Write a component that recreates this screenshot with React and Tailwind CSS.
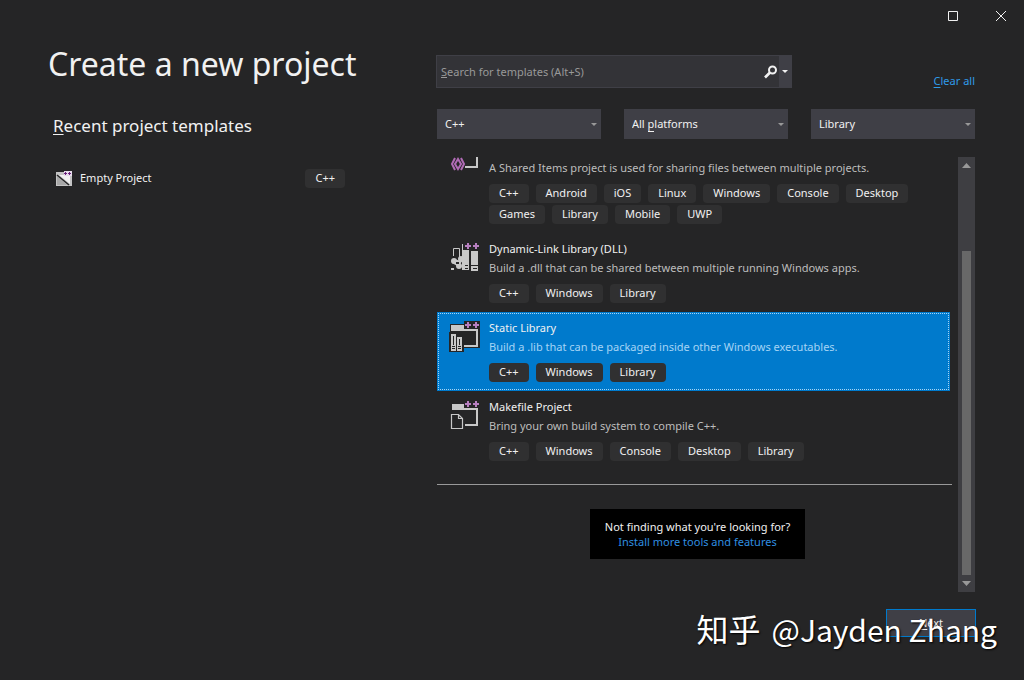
import React, { useState } from "react";

const recent = [{ name: "Empty Project", tag: "C++" }];

const templates = [
    {
        id: "shared",
        icon: SharedIcon,
        description: "A Shared Items project is used for sharing files between multiple projects.",
        tags: ["C++", "Android", "iOS", "Linux", "Windows", "Console", "Desktop", "Games", "Library", "Mobile", "UWP"],
    },
    {
        id: "dll",
        icon: DllIcon,
        title: "Dynamic-Link Library (DLL)",
        description: "Build a .dll that can be shared between multiple running Windows apps.",
        tags: ["C++", "Windows", "Library"],
    },
    {
        id: "static",
        icon: StaticIcon,
        title: "Static Library",
        description: "Build a .lib that can be packaged inside other Windows executables.",
        tags: ["C++", "Windows", "Library"],
    },
    {
        id: "makefile",
        icon: MakefileIcon,
        title: "Makefile Project",
        description: "Bring your own build system to compile C++.",
        tags: ["C++", "Windows", "Console", "Desktop", "Library"],
    },
];

function PlusPlus() {
    return (
        <>
            <path d="M15 1h16v8h-16z" fill="#252526" />
            <path
                d="M16 4h2v-2h2v2h2v2h-2v2h-2v-2h-2zM24 4h2v-2h2v2h2v2h-2v2h-2v-2h-2z"
                fill="#b77fc0"
            />
        </>
    );
}

function SharedIcon() {
    return (
        <svg width="32" height="14" viewBox="0 0 32 14" className="-mt-0.5 shrink-0" aria-hidden="true">
            <path d="M27 0h2v11h-13v-2h11z" fill="#c8c8c8" />
            <path d="M6 1L3 7l3 6M12 1l3 6-3 6" fill="none" stroke="#b06bb5" strokeWidth="2" />
            <path d="M9 2L6 7l3 5 3-5z" fill="none" stroke="#b06bb5" strokeWidth="2" />
        </svg>
    );
}

function DllIcon() {
    return (
        <svg width="32" height="32" viewBox="0 0 32 32" className="mt-0.5 shrink-0" aria-hidden="true">
            <path d="M4.500 15V7.500h6V16" fill="none" stroke="#c8c8c8" strokeWidth="1" />
            <path d="M13 3h1v6h6v20h-7zM22 10h7v20h-7z" fill="#c8c8c8" />
            <path d="M16 24h3v1h-3zM16 27h3v1h-3zM22 24h7v1h-7zM24 27h4v1h-4z" fill="#252526" />
            <circle cx="5" cy="20" r="3" fill="#c8c8c8" />
            <circle cx="12" cy="18" r="3" fill="#c8c8c8" />
            <circle cx="10" cy="25" r="3" fill="#c8c8c8" />
            <path d="M4 18l9 2-3 6-7-4zM2 27h3v2h-3z" fill="#c8c8c8" />
            <path d="M7 21h3v2h-3z" fill="#252526" />
            <PlusPlus />
        </svg>
    );
}

function StaticIcon() {
    return (
        <svg width="32" height="32" viewBox="0 0 32 32" className="mt-0.5 shrink-0" aria-hidden="true">
            <path d="M1 4h15v-3h15v27h-16v4h-15v-20h1z" fill="#252526" />
            <path d="M2 5h14v6h-14z" fill="#c8c8c8" />
            <path d="M16 10h12v16h-13" fill="none" stroke="#c8c8c8" strokeWidth="2" />
            <path d="M1 13h7v3h6v15h-13z" fill="#252526" />
            <path d="M2 14h5v17h-5zM8 17h5v14h-5z" fill="#c8c8c8" />
            <path d="M4 16h1v9h-1zM10 19h1v6h-1zM3 26h3v1h-3zM3 28h3v1h-3zM9 26h3v1h-3zM9 28h3v1h-3z" fill="#252526" />
            <PlusPlus />
        </svg>
    );
}

function MakefileIcon() {
    return (
        <svg width="32" height="32" viewBox="0 0 32 32" className="mt-0.5 shrink-0" aria-hidden="true">
            <path d="M3 5h13v4h13v2h-26z" fill="#c8c8c8" />
            <path d="M28 10v16h-12" fill="none" stroke="#c8c8c8" strokeWidth="2" />
            <path d="M1 13h10l4 4v14h-14z" fill="#252526" />
            <path d="M2.500 15.500h7l4 4v10h-11zM9.500 15.500v4h4" fill="none" stroke="#c8c8c8" strokeWidth="1.200" />
            <PlusPlus />
        </svg>
    );
}

function EmptyIcon() {
    return (
        <svg width="16" height="16" viewBox="0 0 16 16" className="shrink-0" aria-hidden="true">
            <path d="M0 1h16v14h-16z" fill="#c4c4c4" />
            <path d="M3 4h11v9z" fill="#f1f1f1" />
            <path d="M1 5l10 9h-10z" fill="#a8a8a8" />
            <path d="M1 4l12 10" stroke="#252526" strokeWidth="1.500" />
            <path d="M8 0h8v5h-8z" fill="#e8dcec" />
            <path d="M8 2h3v1h-3zM9 1h1v3h-1zM12 2h3v1h-3zM13 1h1v3h-1z" fill="#68217a" />
        </svg>
    );
}

function Arrow({ className = "" }) {
    return (
        <svg width="6" height="3" viewBox="0 0 6 3" className={className} aria-hidden="true">
            <path d="M0 0h6L3 3z" fill="currentColor" />
        </svg>
    );
}

function Tag({ children }) {
    return (
        <li className="flex h-[19px] items-center rounded bg-[#303031] px-[10px] text-[#f1f1f1]">
            {children}
        </li>
    );
}

function Filter({ label, options, underline }) {
    return (
        <div className="relative flex-1">
            <select
                aria-label={label}
                className="h-[30px] w-full appearance-none bg-[#3f3f46] px-2 pt-px text-[#f1f1f1] outline-none"
            >
                {options.map((o) => (
                    <option key={o}>{o}</option>
                ))}
            </select>
            {underline && <span className="pointer-events-none absolute bottom-[7px] left-6 h-px w-[6px] bg-[#f1f1f1]" />}
            <Arrow className="pointer-events-none absolute right-1 top-[14px] text-[#999999]" />
        </div>
    );
}

function TemplateItem({ item, selected, onSelect }) {
    const Icon = item.icon;
    return (
        <div
            onClick={onSelect}
            className={`mr-2 p-px ${selected ? "bg-[#007acc]" : ""}`}
        >
            <div
                className={`flex gap-2 border border-dotted pb-[7px] pl-[10px] ${
                    selected ? "border-[#a5d4f5]" : "border-transparent"
                } ${item.title ? "pt-1" : ""}`}
            >
                <Icon />
                <div className="min-w-0 flex-1">
                    {item.title && <h3 className="leading-[19px] text-[#f1f1f1]">{item.title}</h3>}
                    <p className={`${item.title ? "leading-[19px]" : "leading-[18px]"} ${selected ? "text-[#a5d4f5]" : "text-[#bdbdbd]"}`}>
                        {item.description}
                    </p>
                    <ul className="mt-[7px] flex flex-wrap gap-x-[7px] gap-y-[2px]">
                        {item.tags.map((t) => (
                            <Tag key={t}>{t}</Tag>
                        ))}
                    </ul>
                </div>
            </div>
        </div>
    );
}

const App = () => {
    const [selected, setSelected] = useState("static");
    const [query, setQuery] = useState("");

    return (
        <div className="relative flex min-h-screen flex-col bg-[#252526] [font-family:'Noto_Sans',sans-serif] text-[11px] text-[#f1f1f1]">
            <header className="flex h-8 justify-end">
                <button aria-label="Maximize" className="flex w-12 items-center justify-center pl-0.5">
                    <svg width="10" height="10" viewBox="0 0 10 10">
                        <path d="M.5.5h9v9h-9z" fill="none" stroke="#f1f1f1" />
                    </svg>
                </button>
                <button aria-label="Close" className="flex w-12 items-center justify-center pl-0.5">
                    <svg width="10" height="10" viewBox="0 0 10 10">
                        <path d="M0 0l10 10M10 0L0 10" stroke="#f1f1f1" />
                    </svg>
                </button>
            </header>

            <div className="flex flex-1 pb-[43px] pl-12 pr-[49px]">
                <section className="w-[297px] shrink-0">
                    <h1 className="mt-2 whitespace-nowrap text-[32px] leading-[48px]">Create a new project</h1>
                    <h2 className="mt-6 pl-[5px] text-[17px] leading-7">
                        <u className="underline-offset-2">R</u>ecent project templates
                    </h2>
                    <ul className="mt-[29px]">
                        {recent.map((r) => (
                            <li key={r.name} className="flex items-center gap-2 pl-2">
                                <EmptyIcon />
                                <span className="flex-1">{r.name}</span>
                                <span className="flex h-[19px] items-center rounded bg-[#303031] px-[10px]">{r.tag}</span>
                            </li>
                        ))}
                    </ul>
                </section>

                <main className="ml-[91px] flex min-w-0 flex-1 flex-col pt-[23px]">
                    <div className="flex items-end justify-between">
                        <div className="relative flex h-[33px] w-[66%] border border-[#3f3f46] bg-[#333337]">
                            <input
                                type="text"
                                aria-label="Search for templates"
                                value={query}
                                onChange={(e) => setQuery(e.target.value)}
                                placeholder="Search for templates (Alt+S)"
                                className="min-w-0 flex-1 bg-transparent px-1 pt-px outline-none placeholder:text-[#999999]"
                            />
                            {!query && <span className="pointer-events-none absolute bottom-[9px] left-1 h-px w-[6px] bg-[#999999]" />}
                            <button aria-label="Search" className="flex w-4 items-center justify-center">
                                <svg width="14" height="14" viewBox="0 0 14 14">
                                    <circle cx="8.5" cy="5" r="3.5" fill="none" stroke="#f1f1f1" strokeWidth="2" />
                                    <path d="M6 7.5L1 12.5" stroke="#f1f1f1" strokeWidth="2.6" />
                                </svg>
                            </button>
                            <button aria-label="Search options" className="flex w-3 items-center justify-center bg-[#3f3f46]">
                                <Arrow />
                            </button>
                        </div>
                        <a href="#" className="leading-[14px] text-[#2f9be8]">
                            <u className="underline-offset-2">C</u>lear all
                        </a>
                    </div>

                    <div className="mt-[21px] flex gap-[23px] pl-px">
                        <Filter label="Language" options={["C++"]} />
                        <Filter label="Platform" options={["All platforms"]} underline />
                        <Filter label="Project type" options={["Library"]} />
                    </div>

                    <div className="mt-[18px] flex flex-1 pl-px">
                        <div className="flex min-w-0 flex-1 flex-col">
                            {templates.map((t) => (
                                <TemplateItem
                                    key={t.id}
                                    item={t}
                                    selected={selected === t.id}
                                    onSelect={() => setSelected(t.id)}
                                />
                            ))}
                            <hr className="mr-[6px] mt-[14px] border-[#999999]" />
                            <div className="mt-6 self-center bg-black px-[15px] py-[10px] text-center leading-[15px]">
                                <p>Not finding what you're looking for?</p>
                                <a href="#" className="text-[#2f8fe0]">Install more tools and features</a>
                            </div>
                        </div>
                        <div className="flex w-[17px] flex-col items-center bg-[#3e3e42] py-[6px] text-[#999999]">
                            <svg width="9" height="5" viewBox="0 0 9 5" aria-hidden="true">
                                <path d="M0 5h9L4.500 0z" fill="currentColor" />
                            </svg>
                            <div className="mb-[6px] mt-[83px] w-[9px] flex-1 bg-[#686868]" />
                            <svg width="9" height="5" viewBox="0 0 9 5" aria-hidden="true">
                                <path d="M0 0h9L4.500 5z" fill="currentColor" />
                            </svg>
                        </div>
                    </div>

                    <button className="-mr-px mt-[17px] h-7 w-[90px] self-end border border-[#007acc] bg-[#3f3f46]">
                        <u className="underline-offset-2">N</u>ext
                    </button>
                </main>
            </div>

            <div className="pointer-events-none absolute bottom-7 right-[27px] flex items-baseline gap-[11px] [font-family:'Noto_Sans_CJK_SC',sans-serif] text-[30px] leading-[46px] text-white [text-shadow:1px_1px_2px_#000000]">
                <span className="text-[32px]">知乎</span>
                <span>@Jayden Zhang</span>
            </div>
        </div>
    );
};

export default App;
